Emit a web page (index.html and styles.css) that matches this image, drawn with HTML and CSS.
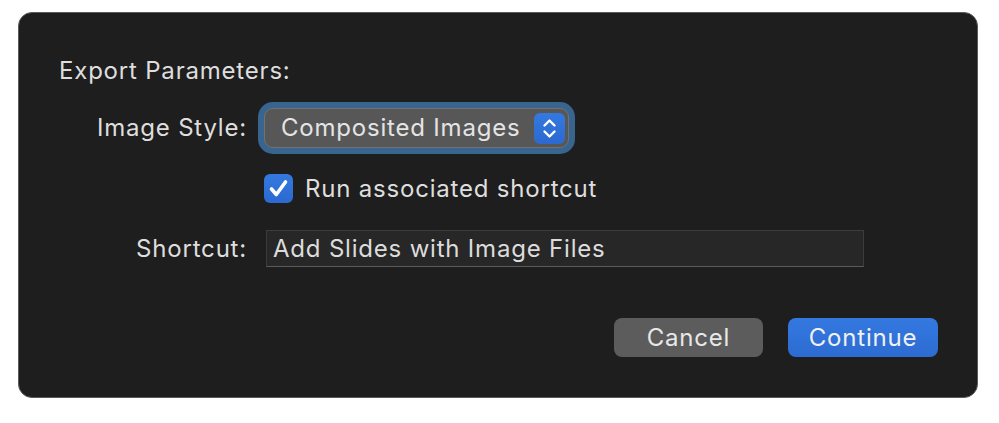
FILE: index.html
```html
<!DOCTYPE html>
<html>
<head>
<meta charset="utf-8">
<link rel="stylesheet" href="styles.css">
</head>
<body>
<div class="dialog">
  <div class="title">Export Parameters:</div>
  <div class="row row-popup">
    <div class="label">Image Style:</div>
    <div class="popup">
      <span class="popup-text">Composited Images</span>
      <span class="stepper">
        <svg width="31" height="31" viewBox="0 0 31 31">
          <path d="M10.5 12.5 L15.5 7.5 L20.5 12.5" fill="none" stroke="#fff" stroke-width="2.4" stroke-linecap="round" stroke-linejoin="round"/>
          <path d="M10.5 18.5 L15.5 23.5 L20.5 18.5" fill="none" stroke="#fff" stroke-width="2.4" stroke-linecap="round" stroke-linejoin="round"/>
        </svg>
      </span>
    </div>
  </div>
  <div class="row row-check">
    <div class="label"></div>
    <div class="check-wrap">
      <span class="checkbox">
        <svg width="29" height="29" viewBox="0 0 29 29">
          <path d="M7.5 15 L12.3 20.5 L21.5 8" fill="none" stroke="#fff" stroke-width="3.6" stroke-linecap="round" stroke-linejoin="round"/>
        </svg>
      </span>
      <span class="check-text">Run associated shortcut</span>
    </div>
  </div>
  <div class="row row-field">
    <div class="label">Shortcut:</div>
    <div class="field">Add Slides with Image Files</div>
  </div>
  <div class="buttons">
    <div class="btn btn-cancel">Cancel</div>
    <div class="btn btn-continue">Continue</div>
  </div>
</div>
</body>
</html>
```
FILE: styles.css
```css
html, body {
  margin: 0;
  padding: 0;
  background: #ffffff;
}
body {
  padding: 12px 0 0 18px;
  font-family: Inter, "Liberation Sans", sans-serif;
}
.dialog {
  box-sizing: border-box;
  width: 960px;
  height: 386px;
  background: #1e1e1e;
  border: 1px solid #5a5a5a;
  border-radius: 14px;
  color: #dedede;
  font-size: 24px;
  letter-spacing: 0.8px;
  display: flex;
  flex-direction: column;
}
.title {
  margin: 44px 0 0 40px;
  line-height: 28px;
  height: 28px;
}
.row {
  display: flex;
  align-items: center;
}
.label {
  width: 228px;
  flex: none;
  text-align: right;
  margin-right: 17px;
  line-height: 28px;
}
.row-popup {
  margin-top: 23px;
  height: 40px;
}
.popup {
  box-sizing: border-box;
  width: 305px;
  height: 40px;
  background: #575757;
  border: 1px solid #727272;
  border-radius: 9px;
  box-shadow: 0 0 0 6px #37658f;
  display: flex;
  align-items: center;
  justify-content: space-between;
  padding: 0 3px 0 16px;
}
.popup-text {
  color: #e4e4e4;
  line-height: 28px;
}
.stepper {
  width: 31px;
  height: 31px;
  border-radius: 6px;
  background: linear-gradient(#3479e0, #2c69d0);
  display: flex;
}
.row-check {
  margin-top: 26px;
  height: 29px;
}
.check-wrap {
  display: flex;
  align-items: center;
}
.checkbox {
  width: 29px;
  height: 29px;
  border-radius: 6px;
  background: linear-gradient(#3479e0, #2c69d0);
  display: flex;
}
.check-text {
  margin-left: 12px;
  line-height: 28px;
}
.row-field {
  margin-top: 27px;
  height: 37px;
}
.field {
  box-sizing: border-box;
  margin-left: 2px;
  width: 598px;
  height: 37px;
  background: #272727;
  border: 1px solid #3c3c3c;
  border-bottom-color: #5a5a5a;
  padding: 0 6px;
  line-height: 35px;
  color: #dcdcdc;
}
.buttons {
  margin: 51px 39px 0 0;
  display: flex;
  justify-content: flex-end;
  gap: 25px;
}
.btn {
  height: 39px;
  border-radius: 8px;
  line-height: 39px;
  text-align: center;
  color: #e8e8e8;
}
.btn-cancel {
  width: 149px;
  background: #5c5c5c;
}
.btn-continue {
  width: 150px;
  background: linear-gradient(#3479e0, #2c6bd2);
  color: #f0f0f0;
}
```
